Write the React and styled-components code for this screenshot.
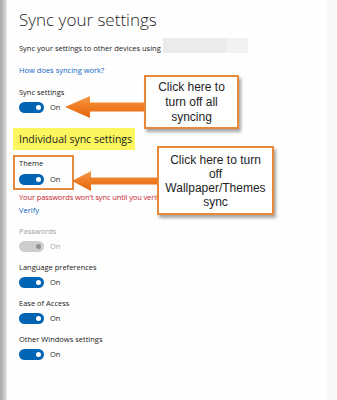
import React from "react";
import styled, { createGlobalStyle } from "styled-components";

const GlobalStyle = createGlobalStyle`
  html, body {
    margin: 0;
    padding: 0;
    background: #ffffff;
  }
  body {
    font-family: "Open Sans", "Noto Sans", sans-serif;
    color: #222;
  }
`;

const Page = styled.div`
  position: relative;
  width: 337px;
  height: 400px;
  display: flex;
  overflow: hidden;
  background: #fefefe;
`;

const LeftStrip = styled.div`
  width: 7px;
  flex-shrink: 0;
  background: linear-gradient(to right, #a9a9a9 0%, #bdbdbd 45%, #d9d9d9 80%, #ececec 100%);
`;

const Content = styled.div`
  flex: 1;
  display: flex;
  flex-direction: column;
  align-items: flex-start;
  padding: 9px 0 0 12px;
`;

const RightPane = styled.div`
  width: 10px;
  flex-shrink: 0;
  background: #f8f8f8;
`;

const Title = styled.h1`
  margin: 0;
  font-size: 17px;
  font-weight: 300;
  line-height: 22px;
  color: #1f1f1f;
  white-space: nowrap;
`;

const Text = styled.div`
  font-size: 7.5px;
  line-height: 12px;
  white-space: nowrap;
  margin-top: ${(p) => p.$mt || 0}px;
  color: ${(p) => p.$color || "#222"};
`;

const Warning = styled(Text)`
  letter-spacing: -0.12px;
`;

const UsingRow = styled.div`
  display: flex;
  align-items: flex-start;
  margin-top: 7px;
  height: 16px;
`;

const UsingText = styled(Text)`
  padding-top: 4px;
`;

const AccountBox = styled.div`
  width: 85px;
  height: 15px;
  margin-left: 2px;
  background: linear-gradient(to right, #ebebeb 0%, #ebebeb 74%, #f2f2f2 76%, #f2f2f2 100%);
`;

const Group = styled.div`
  display: flex;
  flex-direction: column;
  margin-top: ${(p) => p.$mt || 0}px;
`;

const ToggleRow = styled.div`
  display: flex;
  align-items: center;
  height: 12px;
  margin-top: ${(p) => p.$mt ?? 3}px;
  gap: 6px;
`;

const Track = styled.div`
  position: relative;
  width: 25px;
  height: 11px;
  border-radius: 6px;
  background: ${(p) => (p.$disabled ? "#cdcdcd" : "#0064b5")};
  &::after {
    content: "";
    position: absolute;
    right: 3px;
    top: 3px;
    width: 5px;
    height: 5px;
    border-radius: 50%;
    background: ${(p) => (p.$disabled ? "#8f8f8f" : "#ffffff")};
  }
`;

const Heading = styled.div`
  margin: 15px 0 0 -6px;
  padding-left: 6px;
  width: 116px;
  height: 22px;
  line-height: 22px;
  font-size: 10.5px;
  background: #fbf65e;
  color: #1a1a1a;
  white-space: nowrap;
`;

const ThemeBox = styled.div`
  margin: 5px 0 0 -6px;
  width: 53px;
  padding: 0 0 3px 4px;
  border: 2px solid #e58b3f;
  display: flex;
  flex-direction: column;
`;

const Callout = styled.div`
  position: absolute;
  left: ${(p) => p.$left}px;
  top: ${(p) => p.$top}px;
  width: ${(p) => p.$width}px;
  height: ${(p) => p.$height}px;
  box-sizing: border-box;
  padding-top: ${(p) => p.$pt}px;
  border: 2px solid #e8893a;
  background: #ffffff;
  box-shadow: 2px 3px 3px rgba(0, 0, 0, 0.35);
  font-family: "Liberation Sans", Arial, sans-serif;
  font-size: 12px;
  line-height: ${(p) => p.$lh}px;
  text-align: center;
  color: #1e1e1e;
`;

const ArrowSvg = styled.svg`
  position: absolute;
  left: ${(p) => p.$left}px;
  top: ${(p) => p.$top}px;
  overflow: visible;
`;

const Toggle = ({ disabled }) => (
  <ToggleRow>
    <Track $disabled={disabled} />
    <Text $color={disabled ? "#a8a8a8" : "#222"}>On</Text>
  </ToggleRow>
);

const Setting = ({ label, disabled, mt }) => (
  <Group $mt={mt}>
    <Text $color={disabled ? "#a0a0a0" : "#222"}>{label}</Text>
    <Toggle disabled={disabled} />
  </Group>
);

const Arrow = ({ left, top, length, head, headLen, shaft }) => {
  const h = head * 2;
  const c = head;
  const pts = [
    [0, c],
    [headLen, 0],
    [headLen, c - shaft],
    [length, c - shaft],
    [length, c + shaft],
    [headLen, c + shaft],
    [headLen, h],
  ]
    .map((p) => p.join(","))
    .join(" ");
  return (
    <ArrowSvg $left={left} $top={top} width={length} height={h}>
      <defs>
        <linearGradient id={`ag${top}`} x1="0" y1="0" x2="0" y2="1">
          <stop offset="0" stopColor="#f79a4c" />
          <stop offset="0.5" stopColor="#ef7b22" />
          <stop offset="1" stopColor="#e0690f" />
        </linearGradient>
      </defs>
      <polygon points={pts} fill={`url(#ag${top})`} />
    </ArrowSvg>
  );
};

export default function App() {
  return (
    <Page>
      <GlobalStyle />
      <LeftStrip />
      <Content>
        <Title>Sync your settings</Title>
        <UsingRow>
          <UsingText>Sync your settings to other devices using</UsingText>
          <AccountBox />
        </UsingRow>
        <Text $mt={10} $color="#0a66c2">How does syncing work?</Text>
        <Setting label="Sync settings" mt={10} />
        <Heading>Individual sync settings</Heading>
        <ThemeBox>
          <Text>Theme</Text>
          <ToggleRow $mt={4}>
            <Track />
            <Text>On</Text>
          </ToggleRow>
        </ThemeBox>
        <Warning $mt={1} $color="#c8262d">Your passwords won't sync until you verif</Warning>
        <Text $mt={1} $color="#0a66c2">Verify</Text>
        <Setting label="Passwords" disabled mt={9} />
        <Setting label="Language preferences" mt={9} />
        <Setting label="Ease of Access" mt={9} />
        <Setting label="Other Windows settings" mt={9} />
      </Content>
      <RightPane />

      <Arrow left={65} top={96} length={81} head={11} headLen={25} shaft={4.5} />
      <Callout $left={144} $top={75} $width={95} $height={54} $pt={2.5} $lh={15}>
        Click here to
        <br />
        turn off all
        <br />
        syncing
      </Callout>

      <Arrow left={72} top={171} length={86} head={10} headLen={19} shaft={3.5} />
      <Callout $left={157} $top={146} $width={117} $height={69} $pt={5} $lh={14}>
        Click here to turn
        <br />
        off
        <br />
        Wallpaper/Themes
        <br />
        sync
      </Callout>
    </Page>
  );
}
